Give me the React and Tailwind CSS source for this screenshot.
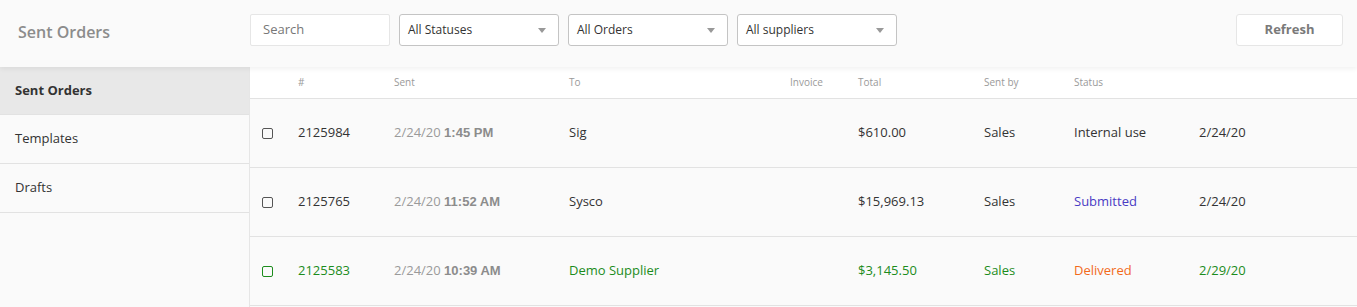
import React from "react";

const font = { fontFamily: '"Open Sans", "Liberation Sans", sans-serif' };

const rows = [
	{
		id: "2125984",
		date: "2/24/20",
		time: "1:45 PM",
		to: "Sig",
		total: "$610.00",
		by: "Sales",
		status: "Internal use",
		statusColor: "text-[#333]",
		due: "2/24/20",
		tone: "text-[#333]",
		box: "border-[#555]",
	},
	{
		id: "2125765",
		date: "2/24/20",
		time: "11:52 AM",
		to: "Sysco",
		total: "$15,969.13",
		by: "Sales",
		status: "Submitted",
		statusColor: "text-[#4a3bc4]",
		due: "2/24/20",
		tone: "text-[#333]",
		box: "border-[#555]",
	},
	{
		id: "2125583",
		date: "2/24/20",
		time: "10:39 AM",
		to: "Demo Supplier",
		total: "$3,145.50",
		by: "Sales",
		status: "Delivered",
		statusColor: "text-[#f26a1b]",
		due: "2/29/20",
		tone: "text-[#1c8c1c]",
		box: "border-[#1c8c1c]",
	},
];

const cols =
	"grid grid-cols-[36px_96px_175px_221px_68px_126px_90px_125px_1fr] items-center pl-3";

function Select({ label }) {
	return (
		<div className="flex items-center justify-between w-[160px] h-[32px] px-2 bg-white border border-[#c4c4c4] rounded-[3px] text-[12px] text-[#333]">
			<span>{label}</span>
			<svg width="8" height="5" viewBox="0 0 8 5" className="mr-1">
				<path d="M0 0h8L4 5z" fill="#999" />
			</svg>
		</div>
	);
}

export default function App() {
	return (
		<div className="w-[1357px] h-[307px] overflow-hidden bg-[#fafafa]" style={font}>
			<header className="relative z-10 flex items-start h-[67px] bg-[#fafafa] shadow-[0_2px_5px_rgba(0,0,0,0.06)] pr-[14px]">
				<h1 className="w-[250px] pl-[18px] pt-[20px] text-[16px] font-semibold text-[#8c8c8c]">
					Sent Orders
				</h1>
				<div className="flex items-center gap-[9px] mt-[14px]">
					<div className="flex items-center w-[140px] h-[32px] px-3 bg-white border border-[#e6e6e6] rounded-[2px] text-[13px] text-[#777]">
						Search
					</div>
					<Select label="All Statuses" />
					<Select label="All Orders" />
					<Select label="All suppliers" />
				</div>
				<button
					type="button"
					className="ml-auto mt-[14px] w-[107px] h-[32px] bg-white border border-[#e6e6e6] rounded-[3px] text-[13px] font-bold text-[#7a7a7a]"
				>
					Refresh
				</button>
			</header>
			<div className="flex">
				<aside className="w-[250px] h-[240px] border-r border-[#e6e6e6] bg-[#fafafa] text-[13px] text-[#333]">
					<div className="flex items-center h-[48px] pl-[15px] bg-[#e8e8e8] font-bold border-b border-[#e2e2e2]">
						Sent Orders
					</div>
					<div className="flex items-center h-[49px] pl-[15px] border-b border-[#e2e2e2]">
						Templates
					</div>
					<div className="flex items-center h-[49px] pl-[15px] border-b border-[#e2e2e2]">
						Drafts
					</div>
				</aside>
				<main className="flex-1">
					<div className={`${cols} h-[32px] bg-white border-b border-[#e2e2e2] text-[10px] text-[#9a9a9a]`}>
						<span />
						<span>#</span>
						<span>Sent</span>
						<span>To</span>
						<span>Invoice</span>
						<span>Total</span>
						<span>Sent by</span>
						<span>Status</span>
						<span />
					</div>
					{rows.map((r) => (
						<div
							key={r.id}
							className={`${cols} h-[69px] border-b border-[#e2e2e2] text-[13px] ${r.tone}`}
						>
							<span className={`block w-[11px] h-[11px] border ${r.box} rounded-[2px]`} />
							<span>{r.id}</span>
							<span className="text-[#9a9a9a]">
								{r.date}{" "}
								<b className="font-bold text-[#8c8c8c]" style={{ fontFamily: '"Liberation Sans", sans-serif' }}>
									{r.time}
								</b>
							</span>
							<span>{r.to}</span>
							<span />
							<span>{r.total}</span>
							<span>{r.by}</span>
							<span className={r.statusColor}>{r.status}</span>
							<span>{r.due}</span>
						</div>
					))}
				</main>
			</div>
		</div>
	);
}
